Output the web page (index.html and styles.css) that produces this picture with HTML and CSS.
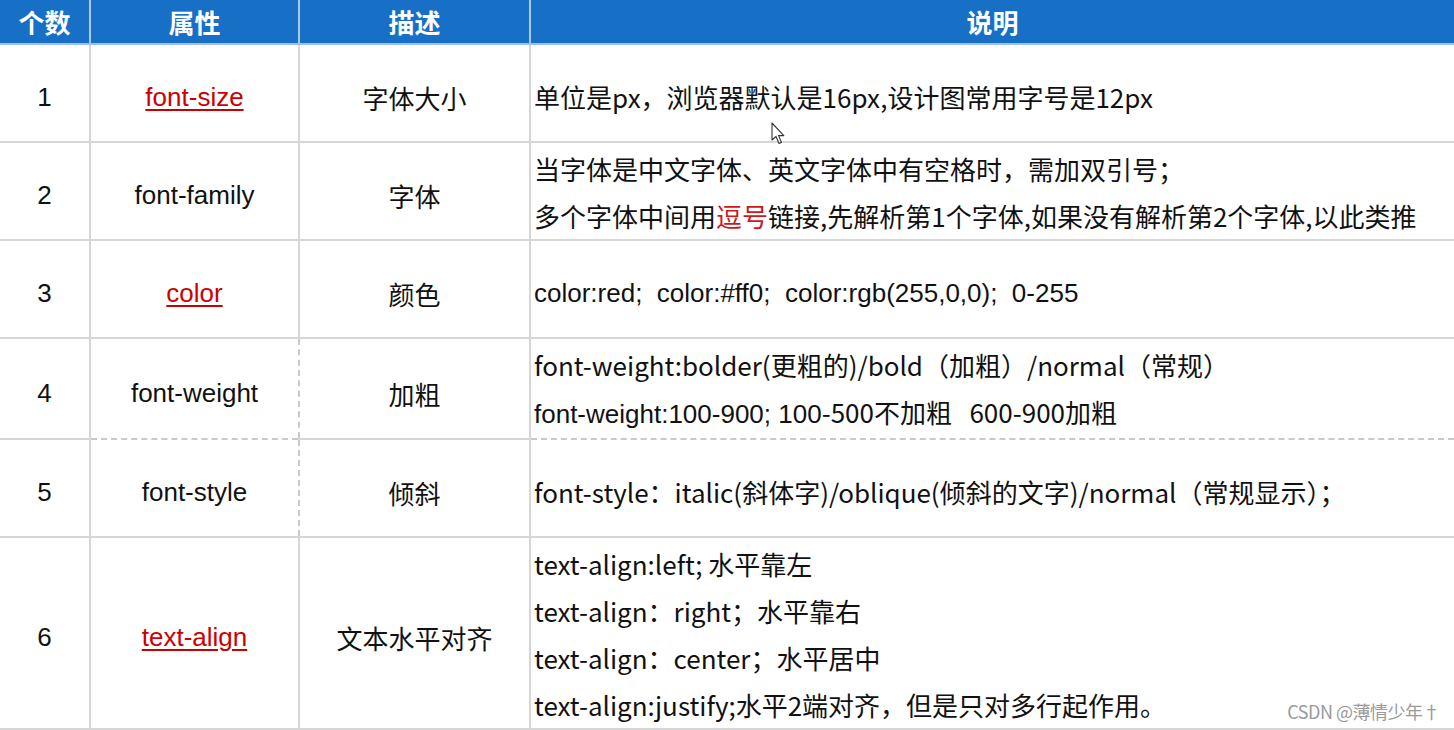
FILE: index.html
```html
<!DOCTYPE html>
<html lang="zh">
<head>
<meta charset="utf-8">
<title>CSS 字体属性</title>
<link rel="stylesheet" href="styles.css">
</head>
<body>
<div class="page">
  <table class="props">
    <colgroup>
      <col class="c-num">
      <col class="c-prop">
      <col class="c-desc">
      <col class="c-note">
    </colgroup>
    <thead>
      <tr>
        <th>个数</th>
        <th>属性</th>
        <th>描述</th>
        <th>说明</th>
      </tr>
    </thead>
    <tbody>
      <tr class="r1">
        <td class="num">1</td>
        <td class="prop"><span class="hl">font-size</span></td>
        <td class="desc">字体大小</td>
        <td class="note">单位是px，浏览器默认是16px,设计图常用字号是12px</td>
      </tr>
      <tr class="r2">
        <td class="num">2</td>
        <td class="prop">font-family</td>
        <td class="desc">字体</td>
        <td class="note"><div>当字体是中文字体、英文字体中有空格时，需加双引号；</div><div>多个字体中间用<span class="red">逗号</span>链接,先解析第1个字体,如果没有解析第2个字体,以此类推</div></td>
      </tr>
      <tr class="r3">
        <td class="num">3</td>
        <td class="prop"><span class="hl">color</span></td>
        <td class="desc">颜色</td>
        <td class="note"><span class="latin pre">color:red;  color:#ff0;  color:rgb(255,0,0);  0-255</span></td>
      </tr>
      <tr class="r4">
        <td class="num">4</td>
        <td class="prop dash-r dash-b">font-weight</td>
        <td class="desc dash-l">加粗</td>
        <td class="note dash-b"><div>font-weight:bolder(更粗的)/bold（加粗）/normal（常规）</div><div><span class="latin">font-weight:100-900; 100</span><span class="pre">-500不加粗   600-900加粗</span></div></td>
      </tr>
      <tr class="r5">
        <td class="num">5</td>
        <td class="prop dash-r dash-t">font-style</td>
        <td class="desc dash-l">倾斜</td>
        <td class="note dash-t">font-style：italic(斜体字)/oblique(倾斜的文字)/normal（常规显示）；</td>
      </tr>
      <tr class="r6">
        <td class="num">6</td>
        <td class="prop"><span class="hl">text-align</span></td>
        <td class="desc">文本水平对齐</td>
        <td class="note"><div>text-align:left; 水平靠左</div><div>text-align：right；水平靠右</div><div>text-align：center；水平居中</div><div>text-align:justify;水平2端对齐，但是只对多行起作用。</div></td>
      </tr>
    </tbody>
  </table>

  <svg class="cursor" width="16" height="24" viewBox="0 0 16 24" aria-hidden="true">
    <path d="M1 1 L1 18 L5 14.5 L8 21.5 L10.5 20.5 L7.6 13.6 L12.8 13.6 Z" fill="#fff" stroke="#333" stroke-width="1.1" stroke-linejoin="round"/>
  </svg>

  <div class="mark">CSDN @薄情少年†</div>
</div>
</body>
</html>
```

FILE: styles.css
```css
html, body {
  margin: 0;
  padding: 0;
  background: #ffffff;
}

.page {
  position: relative;
  width: 1454px;
  height: 730px;
  overflow: hidden;
}

.props {
  width: 1454px;
  border-collapse: collapse;
  table-layout: fixed;
  font-family: "Liberation Sans", "Noto Sans CJK SC", sans-serif;
  font-size: 26px;
  color: #111;
}

.c-num { width: 90px; }
.c-prop { width: 209px; }
.c-desc { width: 231px; }
.c-note { width: auto; }

.props th {
  height: 43px;
  padding: 0;
  background: #1770c6;
  color: #ffffff;
  font-family: "Noto Sans CJK SC", sans-serif;
  font-weight: 700;
  font-size: 26px;
  text-align: center;
  vertical-align: middle;
  border-left: 2px solid #a9c9ee;
  border-bottom: 2px solid #9fc2ea;
  line-height: 40px;
}

.props th:first-child {
  border-left: 0;
}

.props td {
  padding: 9px 0 0 0;
  height: 87px;
  border: 2px solid #d6d6d6;
  vertical-align: middle;
  text-align: center;
}

.props td:first-child {
  border-left: 0;
}

.props td:last-child {
  border-right: 0;
}

.props .r6 td {
  height: 181px;
}

.desc {
  font-family: "Noto Sans CJK SC", sans-serif;
}

.hl {
  color: #cc0000;
  text-decoration: underline;
  text-decoration-thickness: 2px;
  text-underline-offset: 3px;
}

.red {
  color: #cc1a1a;
}

.props td.note {
  text-align: left;
  padding: 2px 0 0 3px;
  height: 94px;
  font-family: "Noto Sans CJK SC", sans-serif;
  font-size: 26px;
  line-height: 47px;
  color: #111;
  white-space: nowrap;
}

.props .r6 td.note {
  height: 188px;
}

.props .r1 td.note,
.props .r3 td.note,
.props .r5 td.note {
  padding-top: 6px;
  height: 90px;
}

.latin {
  font-family: "Liberation Sans", sans-serif;
  font-size: 26px;
}

.pre {
  white-space: pre;
}

.props td.dash-r {
  border-right: 2px dashed #c9c9c9;
}

.props td.dash-l {
  border-left: 2px dashed #c9c9c9;
}

.props td.dash-t {
  border-top: 2px dashed #c9c9c9;
}

.props td.dash-b {
  border-bottom: 2px dashed #c9c9c9;
}

.cursor {
  position: absolute;
  left: 771px;
  top: 122px;
}

.mark {
  position: absolute;
  right: 14px;
  bottom: 6px;
  font-family: "Noto Sans CJK SC", sans-serif;
  font-size: 18px;
  color: #9a9a9a;
  letter-spacing: -0.5px;
}
```
